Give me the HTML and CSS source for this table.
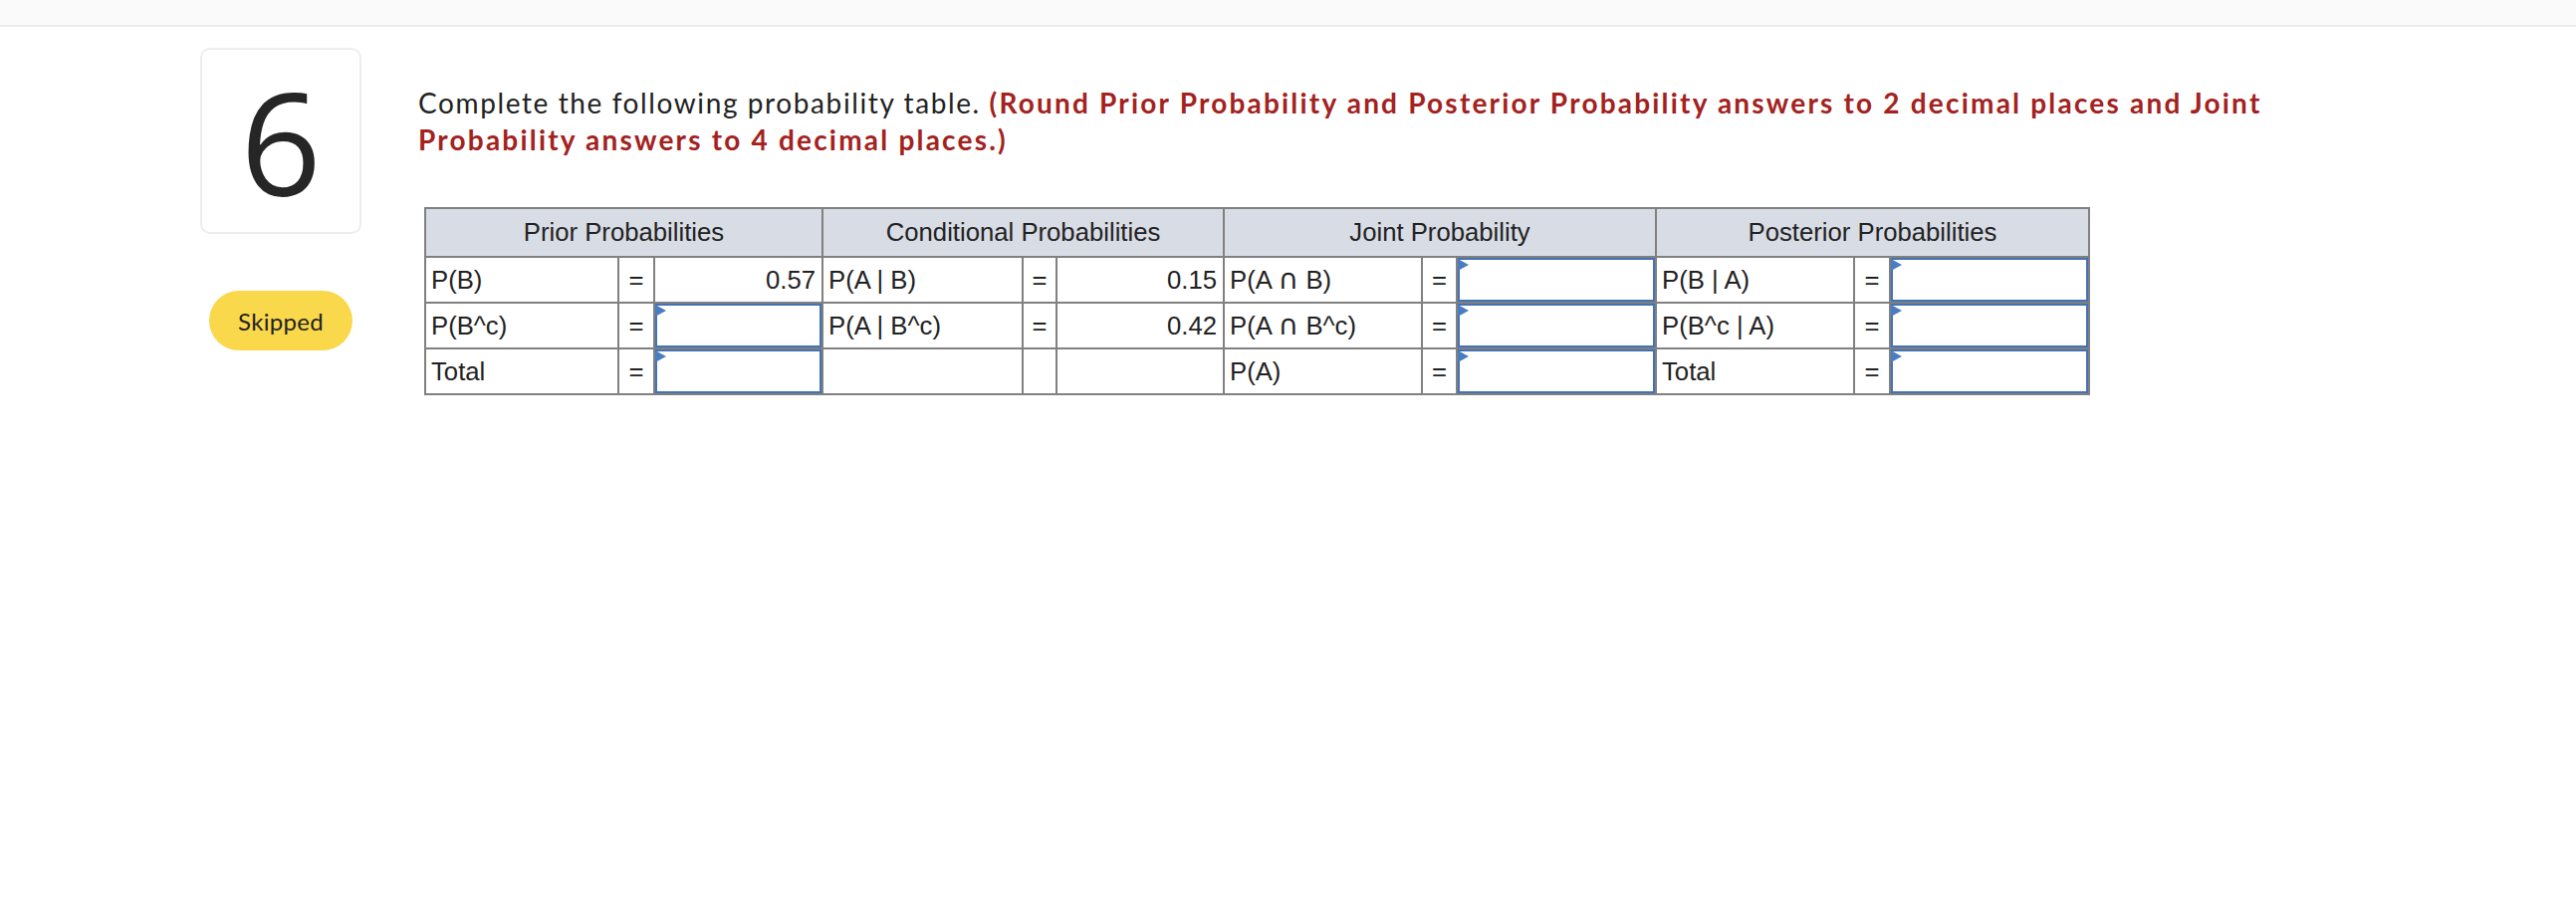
FILE: index.html
```html
<!DOCTYPE html>
<html lang="en">
<head>
<meta charset="utf-8">
<title>Question 6</title>
<link rel="stylesheet" href="styles.css">
</head>
<body>
<div class="topbar"></div>
<div class="main">
  <div class="side">
    <div class="card"><span class="num">6</span></div>
    <div class="pill">Skipped</div>
  </div>
  <div class="content">
    <p class="question">Complete the following probability table. <strong class="note">(Round Prior Probability and Posterior Probability answers to 2 decimal places and Joint Probability answers to 4 decimal places.)</strong></p>
    <table class="ptable">
      <colgroup>
        <col class="c-l1"><col class="c-e1"><col class="c-v1">
        <col class="c-l2"><col class="c-e2"><col class="c-v2">
        <col class="c-l3"><col class="c-e3"><col class="c-v3">
        <col class="c-l4"><col class="c-e4"><col class="c-v4">
      </colgroup>
      <thead>
        <tr>
          <th colspan="3">Prior Probabilities</th>
          <th colspan="3">Conditional Probabilities</th>
          <th colspan="3">Joint Probability</th>
          <th colspan="3">Posterior Probabilities</th>
        </tr>
      </thead>
      <tbody>
        <tr>
          <td class="lbl">P(B)</td><td class="eq">=</td><td class="val">0.57</td>
          <td class="lbl">P(A | B)</td><td class="eq">=</td><td class="val">0.15</td>
          <td class="lbl">P(A <span class="cap">∩</span> B)</td><td class="eq">=</td><td class="inp"><span class="flag"></span><input type="text" class="field"></td>
          <td class="lbl">P(B | A)</td><td class="eq">=</td><td class="inp"><span class="flag"></span><input type="text" class="field"></td>
        </tr>
        <tr>
          <td class="lbl">P(B^c)</td><td class="eq">=</td><td class="inp"><span class="flag"></span><input type="text" class="field"></td>
          <td class="lbl">P(A | B^c)</td><td class="eq">=</td><td class="val">0.42</td>
          <td class="lbl">P(A <span class="cap">∩</span> B^c)</td><td class="eq">=</td><td class="inp"><span class="flag"></span><input type="text" class="field"></td>
          <td class="lbl">P(B^c | A)</td><td class="eq">=</td><td class="inp"><span class="flag"></span><input type="text" class="field"></td>
        </tr>
        <tr>
          <td class="lbl">Total</td><td class="eq">=</td><td class="inp"><span class="flag"></span><input type="text" class="field"></td>
          <td class="lbl"></td><td class="eq"></td><td class="val"></td>
          <td class="lbl">P(A)</td><td class="eq">=</td><td class="inp"><span class="flag"></span><input type="text" class="field"></td>
          <td class="lbl">Total</td><td class="eq">=</td><td class="inp"><span class="flag"></span><input type="text" class="field"></td>
        </tr>
      </tbody>
    </table>
  </div>
</div>
</body>
</html>
```
FILE: styles.css
```css
html, body {
  margin: 0;
  padding: 0;
  background: #ffffff;
}

body {
  font-family: "Lato", "Noto Sans", sans-serif;
  color: #222222;
}

.topbar {
  height: 25px;
  background: #fafafa;
  border-bottom: 2px solid #ececec;
}

.main {
  display: flex;
  align-items: flex-start;
  padding: 21px 0 0 201px;
  gap: 57px;
}

.side {
  width: 162px;
  display: flex;
  flex-direction: column;
  align-items: center;
}

.card {
  box-sizing: border-box;
  width: 162px;
  height: 187px;
  border: 2px solid #ededed;
  border-radius: 10px;
  display: flex;
  align-items: center;
  justify-content: center;
}

.num {
  font-family: "Open Sans", "Noto Sans", sans-serif;
  font-size: 142px;
  line-height: 1;
  color: #262626;
}

.pill {
  margin-top: 57px;
  width: 144px;
  height: 60px;
  border-radius: 30px;
  background: #fad84c;
  display: flex;
  align-items: center;
  justify-content: center;
  font-size: 24px;
  letter-spacing: 0.3px;
  color: #222222;
}

.content {
  padding-top: 37px;
}

.question {
  margin: 0;
  max-width: 1880px;
  font-size: 28px;
  line-height: 37px;
  letter-spacing: 1.6px;
  color: #222222;
}

.note {
  color: #a3221e;
  font-weight: 700;
  letter-spacing: 2.2px;
}

.ptable {
  margin-top: 49px;
  margin-left: 6px;
  table-layout: fixed;
  width: 1673px;
  border-collapse: separate;
  border-spacing: 0;
  border: 1px solid #808080;
  font-family: "Liberation Sans", Arial, sans-serif;
  font-size: 25.7px;
  color: #222222;
}

.c-l1 { width: 194px; }
.c-e1 { width: 36px; }
.c-v1 { width: 169px; }
.c-l2 { width: 201px; }
.c-e2 { width: 34px; }
.c-v2 { width: 168px; }
.c-l3 { width: 199px; }
.c-e3 { width: 35px; }
.c-v3 { width: 200px; }
.c-l4 { width: 199px; }
.c-e4 { width: 36px; }
.c-v4 { width: 200px; }

.ptable th {
  background: #d8dce5;
  border: 1px solid #808080;
  font-weight: 400;
  height: 47px;
  line-height: 47px;
  padding: 0;
  text-align: center;
}

.ptable td {
  border: 1px solid #808080;
  padding: 0;
  height: 44px;
  vertical-align: middle;
  white-space: nowrap;
}

.ptable .lbl {
  padding-left: 5px;
  text-align: left;
}

.cap {
  font-family: "DejaVu Sans", sans-serif;
  font-size: 1.1em;
  line-height: 1;
}

.ptable .eq {
  text-align: center;
}

.ptable .val {
  padding-right: 6px;
  text-align: right;
}

.ptable .inp {
  position: relative;
}

.field {
  display: block;
  box-sizing: border-box;
  width: 100%;
  height: 44px;
  margin: 0;
  border: 2px solid #4473b5;
  border-radius: 0;
  background: #ffffff;
  padding: 0 6px;
  font-family: "Liberation Sans", Arial, sans-serif;
  font-size: 25.7px;
  outline: none;
}

.flag {
  position: absolute;
  left: 0;
  top: 1px;
  width: 0;
  height: 0;
  border-left: 11px solid #4a7cc2;
  border-top: 6.5px solid transparent;
  border-bottom: 6.5px solid transparent;
}
```
